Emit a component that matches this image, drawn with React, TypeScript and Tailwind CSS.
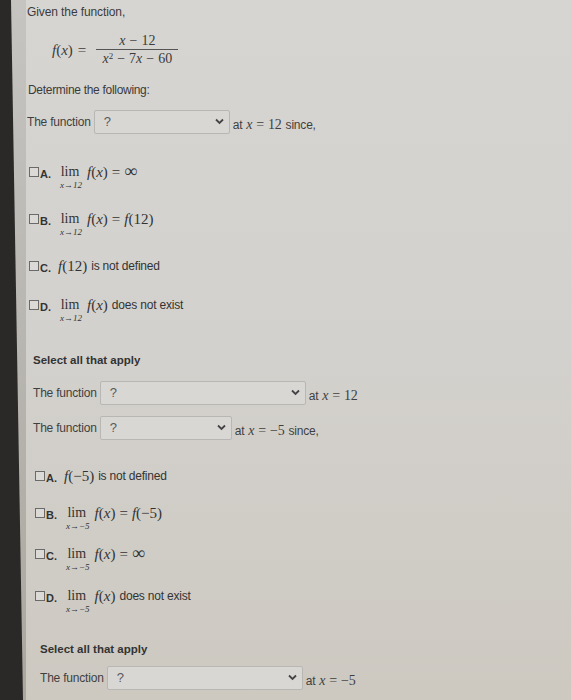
import React from "react";

const sans = { fontFamily: '"Liberation Sans", Arial, sans-serif' };

function M({ children, className = "" }: { children: React.ReactNode; className?: string }) {
  return (
    <span className={"[font-family:'Liberation_Serif',serif] whitespace-nowrap " + className}>{children}</span>
  );
}

function I({ children }: { children: React.ReactNode }) {
  return <span className="italic">{children}</span>;
}

function Op({ c, s = "mx-[4px]" }: { c: string; s?: string }) {
  return <span className={s}>{c}</span>;
}

function Inf() {
  return <span className="text-[18px] leading-[14px]">∞</span>;
}

function Select({ w }: { w: string }) {
  return (
    <div className={"h-[24px] border border-[#b9b7b3] rounded-[2px] bg-[#d9d7d4] flex items-center justify-between pl-[9px] pr-[5px] " + w}>
      <span className="text-[13px] text-[#5a5a5a]">?</span>
      <svg width="9" height="7" viewBox="0 0 9 7">
        <path d="M1 1.5 L4.5 5 L8 1.5" fill="none" stroke="#444" strokeWidth="1.8" />
      </svg>
    </div>
  );
}

function Box() {
  return <div className="w-[10px] h-[10px] border border-[#6a6a6a] bg-[#dcdad7] mt-[3px] shrink-0" />;
}

function Lim({ sub }: { sub: React.ReactNode }) {
  return (
    <span className="inline-flex flex-col items-center leading-none mr-[5px]">
      <M className="text-[14px] leading-[16px]">lim</M>
      <M className="text-[9px] leading-[10px] italic ml-[2px]">{sub}</M>
    </span>
  );
}

function Option({
  letter,
  children,
  h,
}: {
  letter: string;
  children: React.ReactNode;
  h: string;
}) {
  return (
    <div className={"flex items-start " + h}>
      <Box />
      <span className="text-[11px] font-bold ml-[1px] mt-[2px] mr-[7px] text-[#333]">{letter}.</span>
      <div className="flex items-start text-[15px] leading-[16px] text-[#333]">{children}</div>
    </div>
  );
}

function FuncRow({ w, after }: { w: string; after: React.ReactNode }) {
  return (
    <div className="flex items-center">
      <span className="text-[12px] tracking-[-0.2px] mr-[3px] text-[#3f3f3f]">The function</span>
      <Select w={w} />
      <span className="ml-[3px] mt-[6px] text-[12px] tracking-[-0.2px] text-[#3f3f3f] flex items-baseline gap-[4px]">{after}</span>
    </div>
  );
}

const T = "text-[12px] tracking-[-0.2px] ml-[4px]";

export default function App() {
  return (
    <div
      className="w-[571px] h-[700px] flex overflow-hidden bg-[linear-gradient(180deg,#d7d5d2_0%,#d3d1cd_50%,#cdc9c1_100%)]"
      style={sans}
    >
      <div className="w-[26px] shrink-0 relative bg-[linear-gradient(180deg,#c6c4c1,#aaa79f)]">
        <div className="h-full bg-[#2b2927] [clip-path:polygon(0_0,11px_0,23px_100%,0_100%)]" />
      </div>
      <div className="flex-1 flex flex-col text-[#3b3b3b]">
        {/* Top */}
        <div className="ml-[1px] mt-[4px] text-[12px] tracking-[-0.1px] leading-[16px]">Given the function,</div>
        <div className="ml-[26px] mt-[12px] flex items-center">
          <M className="text-[15px]">
            <I>f</I>(<I>x</I>)<Op c="=" s="ml-[5px] mr-[4px]" />
          </M>
          <div className="flex flex-col items-center ml-[6px]">
            <M className="text-[14px] leading-[17px] px-[2px]">
              <I>x</I>
              <Op c="−" />
              12
            </M>
            <div className="h-[1px] w-[82px] bg-[#555]" />
            <M className="text-[14px] leading-[18px]">
              <I>x</I>
              <sup className="text-[9px]">2</sup>
              <Op c="−" />7<I>x</I>
              <Op c="−" />
              60
            </M>
          </div>
        </div>
        <div className="ml-[2px] mt-[14px] text-[12px] tracking-[-0.3px] leading-[16px]">Determine the following:</div>

        <div className="ml-[1px] mt-[10px]">
          <FuncRow
            w="w-[136px]"
            after={
              <>
                <span>at</span>
                <M className="text-[14px]">
                  <I>x</I>
                  <Op c="=" />
                  12
                </M>
                <span>since,</span>
              </>
            }
          />
        </div>

        {/* Options 1 */}
        <div className="ml-[3px] mt-[29px] flex flex-col">
          <Option letter="A" h="h-[47px]">
            <Lim sub={<>x→12</>} />
            <M>
              <I>f</I>(<I>x</I>)<Op c="=" />
              <Inf />
            </M>
          </Option>
          <Option letter="B" h="h-[47px]">
            <Lim sub={<>x→12</>} />
            <M>
              <I>f</I>(<I>x</I>)<Op c="=" />
              <I>f</I>(12)
            </M>
          </Option>
          <Option letter="C" h="h-[39px]">
            <M>
              <I>f</I>(12)
            </M>
            <span className={T}>is not defined</span>
          </Option>
          <Option letter="D" h="h-[40px]">
            <Lim sub={<>x→12</>} />
            <M>
              <I>f</I>(<I>x</I>)
            </M>
            <span className={T}>does not exist</span>
          </Option>
        </div>

        <div className="ml-[7px] mt-[15px] text-[11.5px] font-bold leading-[16px] text-[#333]">
          Select all that apply
        </div>

        <div className="ml-[7px] mt-[11px]">
          <FuncRow
            w="w-[206px]"
            after={
              <>
                <span>at</span>
                <M className="text-[14px]">
                  <I>x</I>
                  <Op c="=" />
                  12
                </M>
              </>
            }
          />
        </div>
        <div className="ml-[7px] mt-[8px]">
          <FuncRow
            w="w-[132px]"
            after={
              <>
                <span>at</span>
                <M className="text-[14px]">
                  <I>x</I>
                  <Op c="=" />
                  −5
                </M>
                <span>since,</span>
              </>
            }
          />
        </div>

        {/* Options 2 */}
        <div className="ml-[9px] mt-[27px] flex flex-col">
          <Option letter="A" h="h-[37px]">
            <M>
              <I>f</I>(−5)
            </M>
            <span className={T}>is not defined</span>
          </Option>
          <Option letter="B" h="h-[41px]">
            <Lim sub={<>x→−5</>} />
            <M>
              <I>f</I>(<I>x</I>)<Op c="=" />
              <I>f</I>(−5)
            </M>
          </Option>
          <Option letter="C" h="h-[42px]">
            <Lim sub={<>x→−5</>} />
            <M>
              <I>f</I>(<I>x</I>)<Op c="=" />
              <Inf />
            </M>
          </Option>
          <Option letter="D" h="h-[40px]">
            <Lim sub={<>x→−5</>} />
            <M>
              <I>f</I>(<I>x</I>)
            </M>
            <span className={T}>does not exist</span>
          </Option>
        </div>

        <div className="ml-[14px] mt-[13px] text-[11.5px] font-bold leading-[16px] text-[#333]">
          Select all that apply
        </div>
        <div className="ml-[14px] mt-[7px]">
          <FuncRow
            w="w-[196px]"
            after={
              <>
                <span>at</span>
                <M className="text-[14px]">
                  <I>x</I>
                  <Op c="=" />
                  −5
                </M>
              </>
            }
          />
        </div>
      </div>
    </div>
  );
}
